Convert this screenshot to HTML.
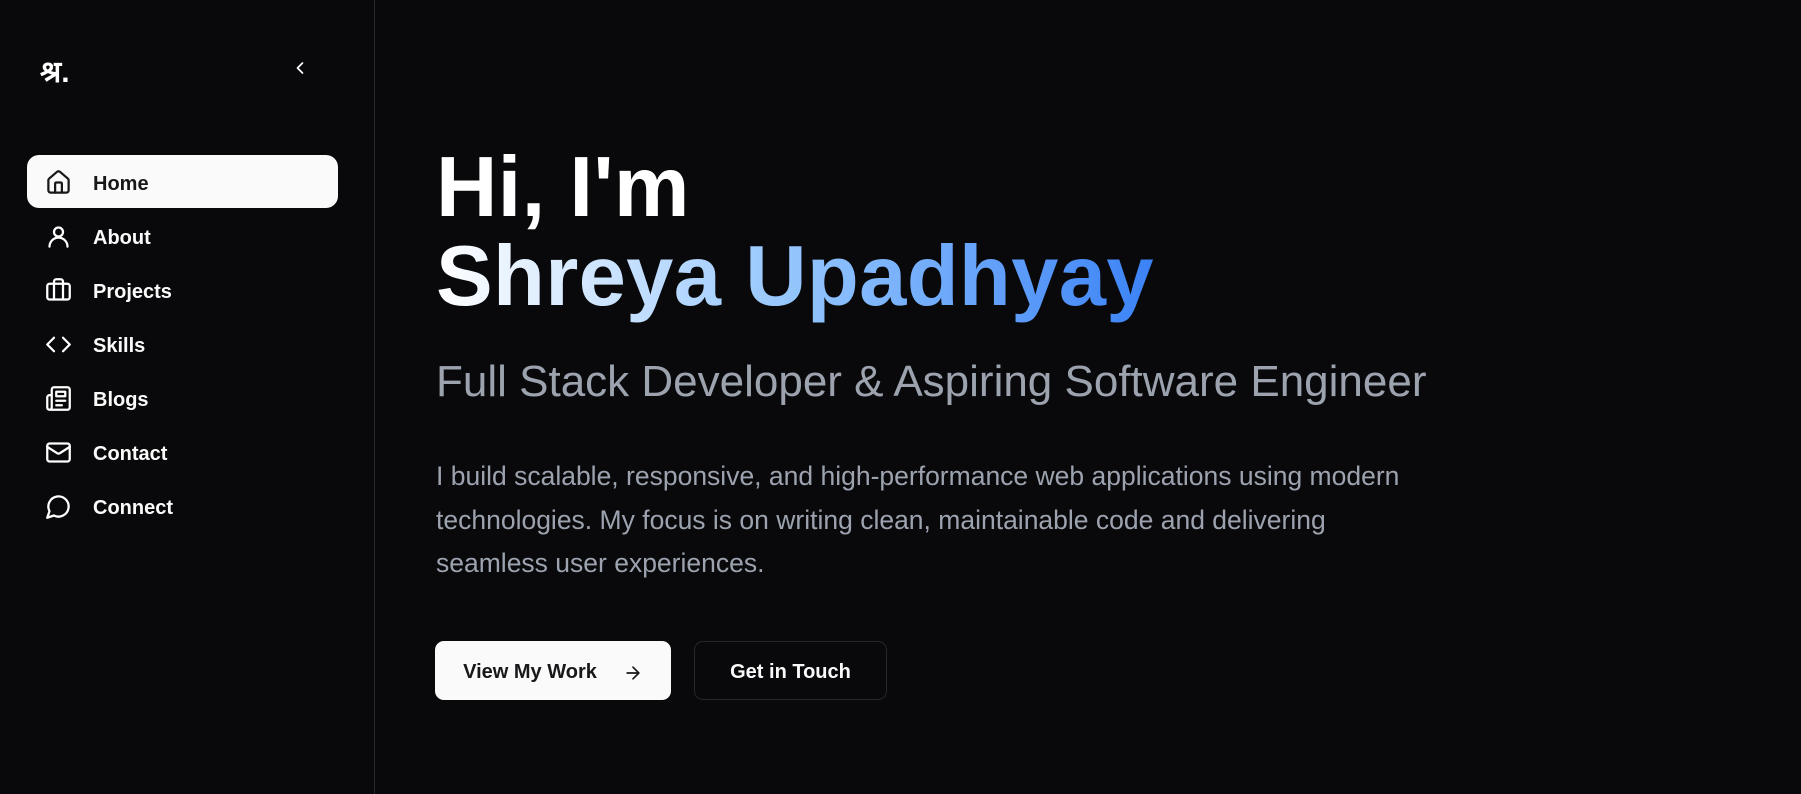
<!DOCTYPE html>
<html><head><meta charset="utf-8"><style>
*{margin:0;padding:0;box-sizing:border-box}
html,body{width:1801px;height:794px;background:#09090b;overflow:hidden;font-family:"Liberation Sans",sans-serif;color:#fafafa}
.side{position:absolute;left:0;top:0;width:375px;height:794px;border-right:1px solid #27272a;background:#09090b}
.logo{position:absolute;left:40px;top:50px;font-size:30px;font-weight:bold;color:#fff}
.chev{position:absolute;left:290px;top:58px}
.nav{position:absolute;left:27px;top:155px;width:311px}
.item{height:53px;display:flex;align-items:center;padding-left:18px;font-size:20px;font-weight:bold;color:#fafafa;border-radius:12px;margin-bottom:1px;padding-top:5px}
.item svg{width:27px;height:27px;margin-right:21px;flex:none;margin-top:-4px}
.item.active{background:#fafafa;color:#18181b;height:53px}
.main{position:absolute;left:436px;top:0}
h1{position:absolute;top:143px;left:0;font-size:85px;line-height:89px;font-weight:bold;white-space:nowrap;letter-spacing:0.3px;color:#fff}
.grad{background:linear-gradient(90deg,#ffffff 0%,#93c5fd 50%,#3b82f6 100%);-webkit-background-clip:text;background-clip:text;color:transparent}
.sub{position:absolute;top:357px;left:0;font-size:44px;color:#9ca3af;white-space:nowrap}
.p{position:absolute;top:455px;left:0;width:990px;font-size:26.5px;line-height:43.5px;color:#9ca3af}
.btn{position:absolute;top:641px;height:59px;border-radius:9px;display:flex;align-items:center;justify-content:center;font-size:20px;font-weight:bold;padding-top:4px}
.b1{left:-1px;width:236px;background:#fafafa;color:#18181b}
.b2{left:258px;width:193px;border:1px solid #27272a;color:#fafafa}
</style></head><body>
<div class="side">
<div class="logo">श्र.</div>
<svg class="chev" width="20" height="20" viewBox="0 0 24 24" fill="none" stroke="#fff" stroke-width="2" stroke-linecap="round" stroke-linejoin="round"><path d="M15 18l-6-6 6-6"/></svg>
<div class="nav">
<div class="item active"><svg viewBox="0 0 24 24" fill="none" stroke="#18181b" stroke-width="2" stroke-linecap="round" stroke-linejoin="round"><path d="M15 21v-8a1 1 0 0 0-1-1h-4a1 1 0 0 0-1 1v8"/><path d="M3 10a2 2 0 0 1 .7-1.5l7-6a2 2 0 0 1 2.6 0l7 6A2 2 0 0 1 21 10v9a2 2 0 0 1-2 2H5a2 2 0 0 1-2-2z"/></svg>Home</div>
<div class="item"><svg viewBox="0 0 24 24" fill="none" stroke="#fff" stroke-width="2" stroke-linecap="round" stroke-linejoin="round"><circle cx="12" cy="8" r="4"/><path d="M20 21a8 8 0 0 0-16 0"/></svg>About</div>
<div class="item"><svg viewBox="0 0 24 24" fill="none" stroke="#fff" stroke-width="2" stroke-linecap="round" stroke-linejoin="round"><path d="M16 20V4a2 2 0 0 0-2-2h-4a2 2 0 0 0-2 2v16"/><rect x="2" y="6" width="20" height="14" rx="2"/></svg>Projects</div>
<div class="item"><svg viewBox="0 0 24 24" fill="none" stroke="#fff" stroke-width="2" stroke-linecap="round" stroke-linejoin="round"><path d="M16 18l6-6-6-6"/><path d="M8 6l-6 6 6 6"/></svg>Skills</div>
<div class="item"><svg viewBox="0 0 24 24" fill="none" stroke="#fff" stroke-width="2" stroke-linecap="round" stroke-linejoin="round"><path d="M4 22h16a2 2 0 0 0 2-2V4a2 2 0 0 0-2-2H8a2 2 0 0 0-2 2v16a2 2 0 0 1-4 0v-9c0-1.1.9-2 2-2h2"/><path d="M18 14h-8M15 18h-5"/><path d="M10 6h8v4h-8z"/></svg>Blogs</div>
<div class="item"><svg viewBox="0 0 24 24" fill="none" stroke="#fff" stroke-width="2" stroke-linecap="round" stroke-linejoin="round"><rect x="2" y="4" width="20" height="16" rx="2"/><path d="M22 7l-8.97 5.7a1.94 1.94 0 0 1-2.06 0L2 7"/></svg>Contact</div>
<div class="item"><svg viewBox="0 0 24 24" fill="none" stroke="#fff" stroke-width="2" stroke-linecap="round" stroke-linejoin="round"><path d="M7.9 20A9 9 0 1 0 4 16.1L2 22z"/></svg>Connect</div>
</div>
</div>
<div class="main">
<h1>Hi, I'm<br><span class="grad">Shreya Upadhyay</span></h1>
<div class="sub">Full Stack Developer &amp; Aspiring Software Engineer</div>
<div class="p">I build scalable, responsive, and high-performance web applications using modern technologies. My focus is on writing clean, maintainable code and delivering seamless user experiences.</div>
<div class="btn b1">View My Work<svg style="margin-left:26px" width="20" height="20" viewBox="0 0 24 24" fill="none" stroke="#18181b" stroke-width="2" stroke-linecap="round" stroke-linejoin="round"><path d="M5 12h14M12 5l7 7-7 7"/></svg></div>
<div class="btn b2">Get in Touch</div>
</div>
</body></html>
